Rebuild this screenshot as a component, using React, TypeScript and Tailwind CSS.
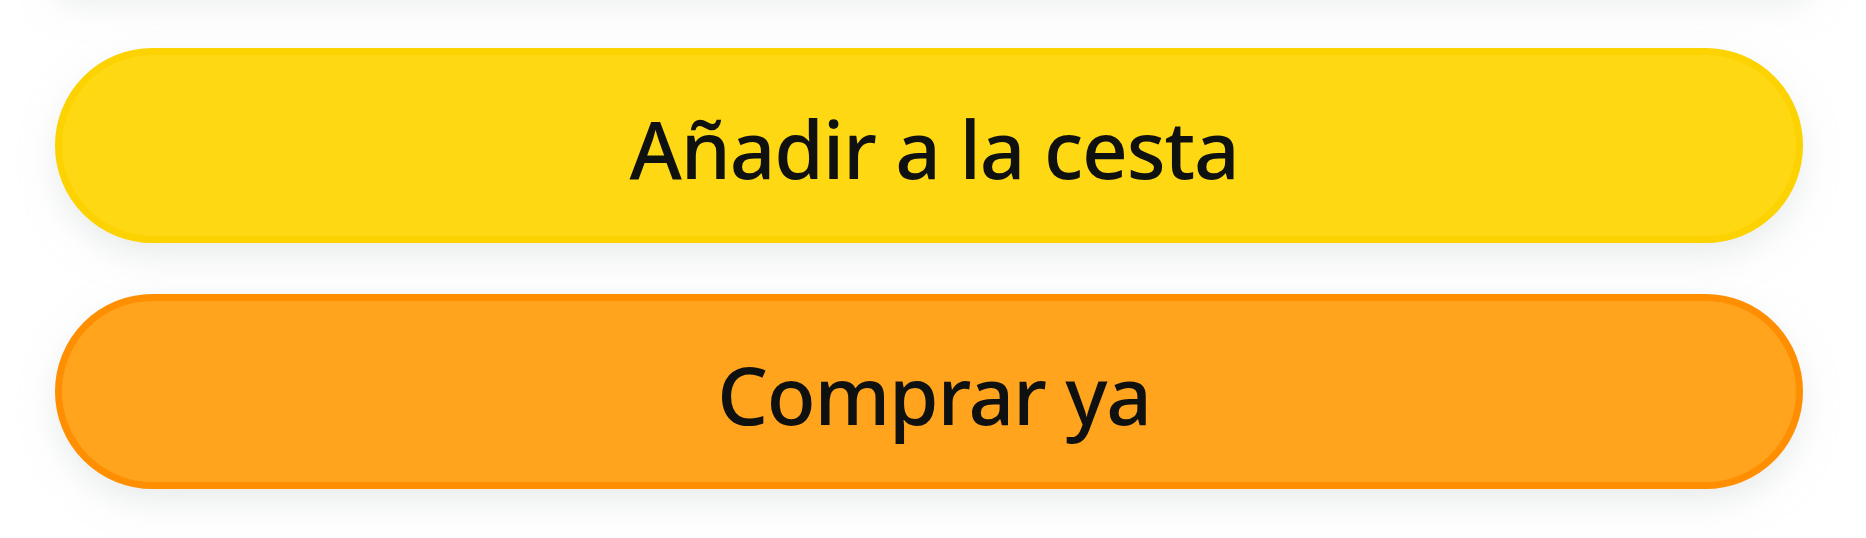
export default function App() {
  return (
    <div className="w-[1866px] h-[538px] bg-white overflow-hidden" style={{ fontFamily: '"Noto Sans", Arial, sans-serif' }}>
      {/* element above, only its shadow shows */}
      <div className="mx-[55px] h-[40px] -mt-[50px] rounded-full bg-white shadow-[0_13px_32px_rgba(213,217,217,0.5)]" />
      <div className="flex flex-col gap-[51px] pl-[55px] pt-[58px]">
        <button className="w-[1748px] h-[195px] rounded-full border-[7px] border-[#FCD200] bg-[#FFD814] shadow-[0_13px_32px_rgba(213,217,217,0.5)] flex items-center justify-center pt-[5px] pl-[10px] text-[80px] font-medium tracking-[-1.2px] text-[#0F1111]">
          Añadir a la cesta
        </button>
        <button className="w-[1748px] h-[195px] rounded-full border-[7px] border-[#FF8F00] bg-[#FFA41C] shadow-[0_13px_32px_rgba(213,217,217,0.5)] flex items-center justify-center pt-[5px] pl-[10px] text-[80px] font-medium tracking-[-1.2px] text-[#0F1111]">
          Comprar ya
        </button>
      </div>
    </div>
  )
}
